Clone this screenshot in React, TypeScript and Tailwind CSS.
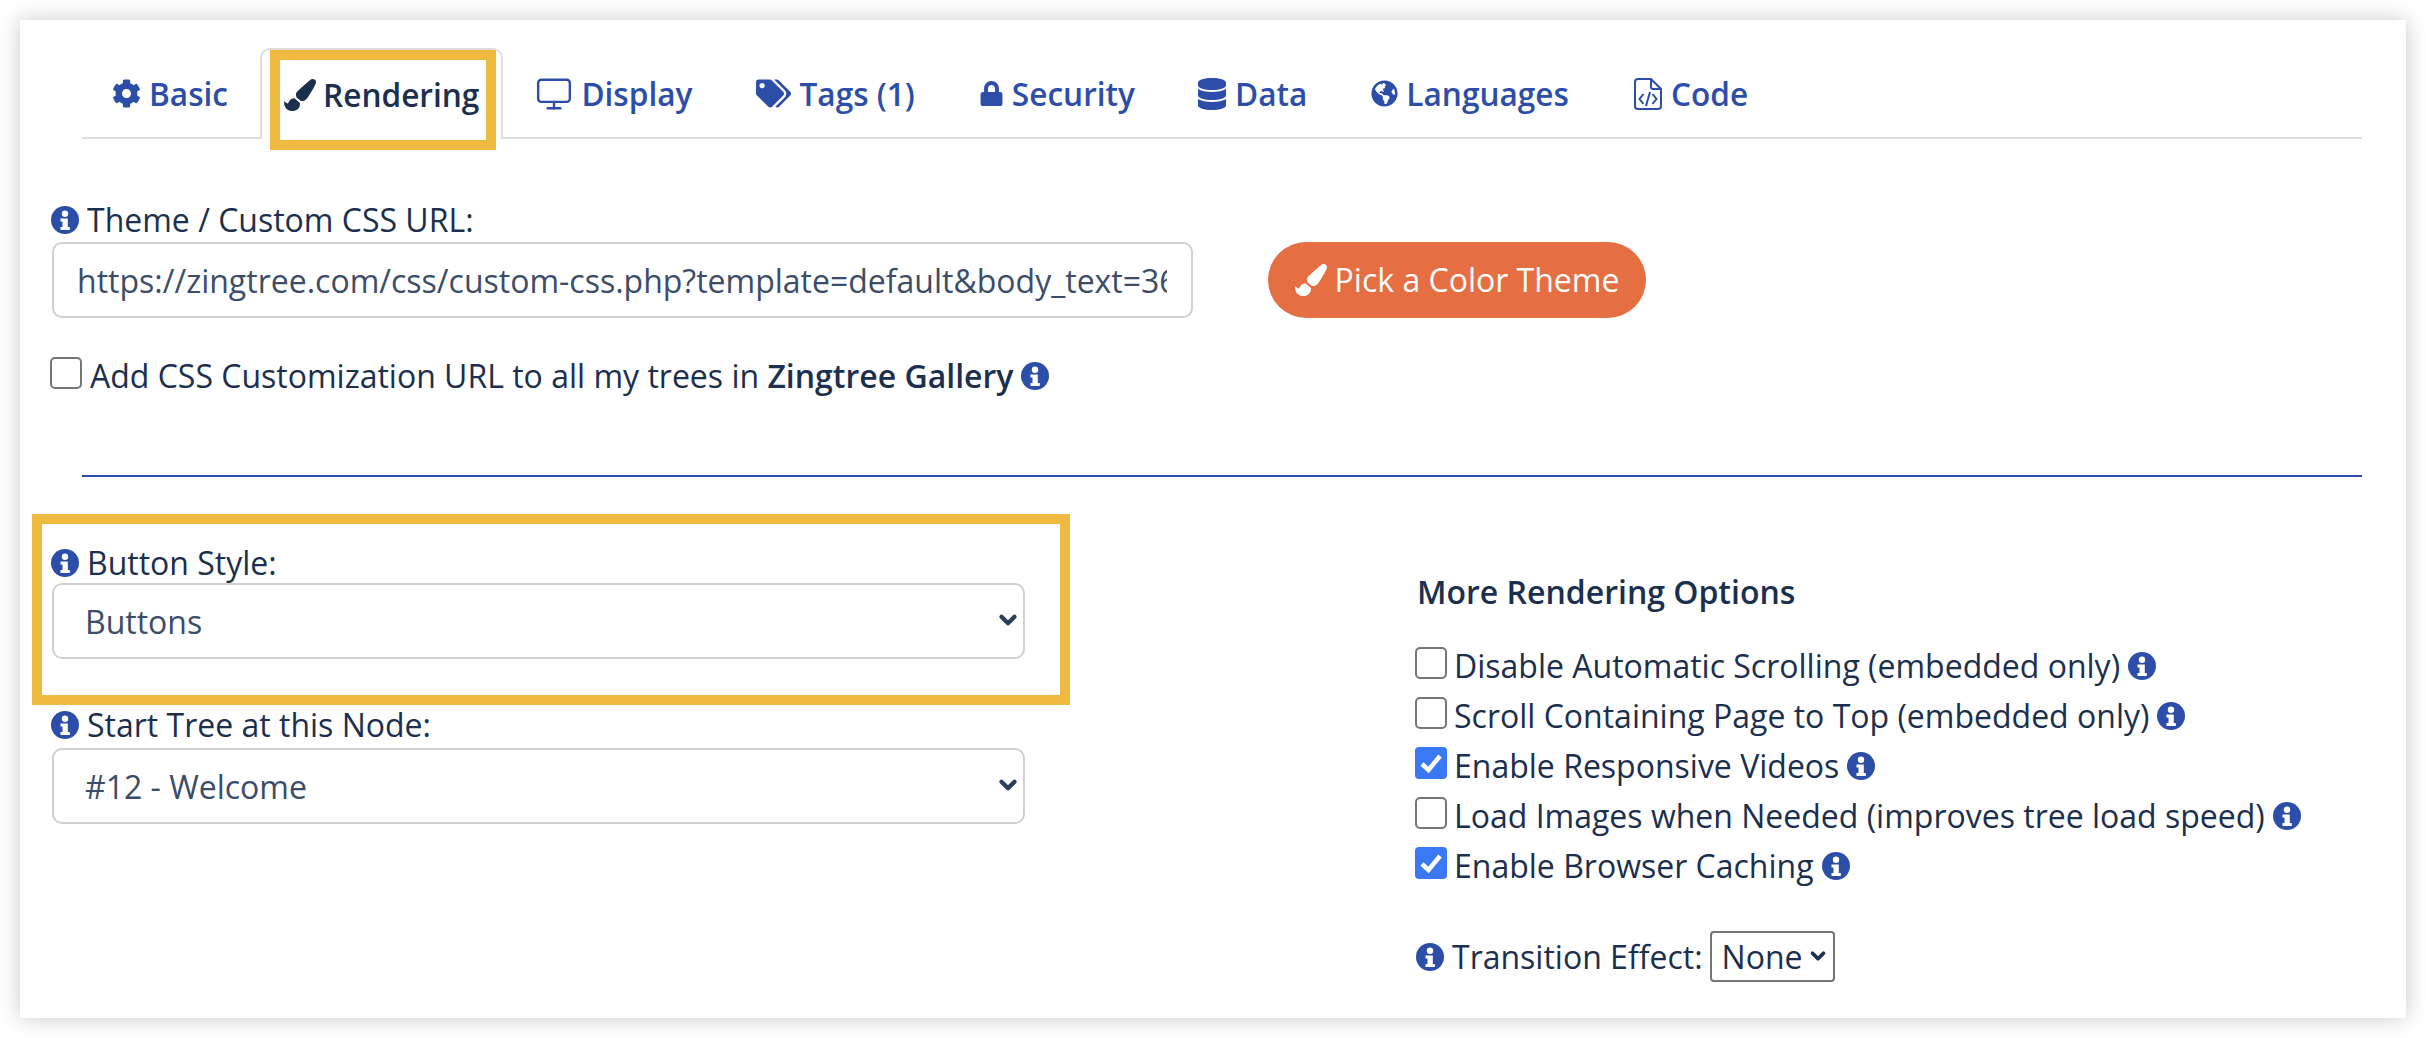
import { ChevronDown } from 'lucide-react';
import { FaCog, FaDatabase, FaGlobeAmericas, FaLock, FaPaintBrush, FaTags } from 'react-icons/fa';
import { LuMonitor } from 'react-icons/lu';

// outline file icon with </> inside, the packages' versions are too narrow
const FileCodeIcon = ({ className = '' }: { className?: string }) => (
  <svg width="28" height="32" viewBox="0 0 28 32" fill="none" stroke="currentColor" strokeWidth="2" className={className}>
    <path d="M4 1 H17 L27 11 V28 A3 3 0 0 1 24 31 H4 A3 3 0 0 1 1 28 V4 A3 3 0 0 1 4 1 Z" />
    <path d="M17 1 V9 A2 2 0 0 0 19 11 H27" />
    <path d="M9.5 16 L5.5 21 L9.5 26 M18.5 16 L22.5 21 L18.5 26 M16 14 L12 28" />
  </svg>
);

const tabs = [
  { label: 'Basic', icon: <FaCog size={29} /> },
  { label: 'Rendering', icon: <FaPaintBrush size={32} />, active: true },
  { label: 'Display', icon: <LuMonitor size={38} strokeWidth={1.5} /> },
  { label: 'Tags (1)', icon: <FaTags size={35} /> },
  { label: 'Security', icon: <FaLock size={25} /> },
  { label: 'Data', icon: <FaDatabase size={32} className="-ml-[3px] -mr-[1px]" /> },
  { label: 'Languages', icon: <FaGlobeAmericas size={27} /> },
  { label: 'Code', icon: <FileCodeIcon className="ml-[1px] mr-[1px]" /> },
];

const options = [
  { label: 'Disable Automatic Scrolling (embedded only)', checked: false },
  { label: 'Scroll Containing Page to Top (embedded only)', checked: false },
  { label: 'Enable Responsive Videos', checked: true },
  { label: 'Load Images when Needed (improves tree load speed)', checked: false },
  { label: 'Enable Browser Caching', checked: true },
];

const Info = ({ className = '' }: { className?: string }) => (
  <svg width="28" height="28" viewBox="0 0 28 28" className={`shrink-0 text-[#2c4ea8] ${className}`}>
    <circle cx="14" cy="14" r="14" fill="currentColor" />
    <circle cx="14" cy="7.8" r="3.2" fill="white" />
    <path d="M9.5 12.5 H16.8 V21 H18.8 V24 H9.5 V21 H11.5 V15.5 H9.5 Z" fill="white" />
  </svg>
);

const Checkbox = ({ checked, className = '' }: { checked?: boolean; className?: string }) =>
  checked ? (
    <span className={`flex h-[32px] w-[32px] shrink-0 items-center justify-center rounded-[4px] bg-[#3b78f5] ${className}`}>
      <svg width="24" height="22" viewBox="0 0 24 22" fill="none">
        <path d="M3 12 L9.5 18 L21 4" stroke="white" strokeWidth="4.5" />
      </svg>
    </span>
  ) : (
    <span className={`h-[32px] w-[32px] shrink-0 rounded-[5px] border-2 border-[#767676] bg-white ${className}`} />
  );

const FieldSelect = ({ value }: { value: string }) => (
  <div className="relative h-[76px] w-[973px]">
    <select
      defaultValue={value}
      className="h-full w-full appearance-none rounded-[10px] border-2 border-[#d0d0d0] bg-white pl-[31px] pt-[2px] text-[32px] text-[#3b4d68]"
    >
      <option>{value}</option>
    </select>
    <ChevronDown size={26} strokeWidth={4} className="pointer-events-none absolute right-[4px] top-[24px] text-[#2b3e5c]" />
  </div>
);

export default function App() {
  return (
    <div className="h-[1038px] w-[2426px] overflow-hidden bg-white pl-[20px] pt-[20px] font-['Open_Sans',sans-serif] text-[32px] text-[#1b2f4e]">
      <div className="relative h-[998px] w-[2386px] bg-white pt-[28px] shadow-[0_0_20px_rgba(0,0,0,0.22)]">
        {/* tabs */}
        <div className="ml-[62px] mr-[44px] h-[91px] border-b-2 border-[#dddddd]">
          <div className="-ml-[2px] flex h-[91px] text-[31.6px]">
            {tabs.map((tab) =>
              tab.active ? (
                <div
                  key={tab.label}
                  className="flex items-center gap-[7px] rounded-t-[10px] border-2 border-b-0 border-[#dddddd] bg-white pl-[22px] pr-[22px] font-semibold text-[#1b2f4e]"
                >
                  {tab.icon}
                  {tab.label}
                </div>
              ) : (
                <div key={tab.label} className="flex items-center gap-[8px] px-[32px] font-semibold text-[#2c4ea8]">
                  {tab.icon}
                  {tab.label}
                </div>
              ),
            )}
          </div>
        </div>

        <div className="pl-[32px] pr-[44px]">
          <label className="mt-[61px] flex h-[40px] items-center gap-[8px]">
            <Info className="-ml-[1px]" />
            Theme / Custom CSS URL:
          </label>
          <div className="mt-[2px] flex gap-[75px]">
            <input
              readOnly
              value="https://zingtree.com/css/custom-css.php?template=default&body_text=36454f"
              className="h-[76px] w-[1141px] rounded-[10px] border-2 border-[#d0d0d0] pl-[23px] pr-[24px] text-[#3b4d68] outline-none"
            />
            <button className="flex h-[76px] w-[378px] items-center justify-center gap-[8px] rounded-[38px] bg-[#e56e42] text-white">
              <FaPaintBrush size={32} />
              Pick a Color Theme
            </button>
          </div>
          <div className="mt-[38px] flex h-[40px] items-center gap-[8px]">
            <Checkbox className="-ml-[2px] -mt-[6px]" />
            <span>
              Add CSS Customization URL to all my trees in <b className="font-semibold">Zingtree Gallery</b>
            </span>
            <Info />
          </div>
        </div>

        <div className="ml-[62px] mr-[44px] mt-[79px] border-t-2 border-[#2c4ea8]" />

        <div className="flex pl-[32px]">
          <div className="w-[1363px] pt-[66px]">
            <label className="flex h-[40px] items-center gap-[8px]">
              <Info className="-ml-[1px]" />
              Button Style:
            </label>
            <FieldSelect value="Buttons" />
            <label className="mb-[3px] mt-[46px] flex h-[40px] items-center gap-[8px]">
              <Info className="-ml-[1px]" />
              Start Tree at this Node:
            </label>
            <FieldSelect value="#12 - Welcome" />
          </div>

          <div className="pt-[95px]">
            <h3 className="ml-[2px] flex h-[40px] items-center font-semibold">More Rendering Options</h3>
            <div className="mt-[35px] flex flex-col gap-[18px]">
              {options.map((opt) => (
                <div key={opt.label} className="flex h-[32px] items-center gap-[7px]">
                  <Checkbox checked={opt.checked} />
                  <div className="flex items-center gap-[8px] pt-[6px]">
                    <span>{opt.label}</span>
                    <Info />
                  </div>
                </div>
              ))}
            </div>
            <div className="ml-[2px] mt-[52px] flex h-[51px] items-center gap-[8px]">
              <Info className="-ml-[1px]" />
              <span>Transition Effect:</span>
              <div className="relative -ml-[1px] h-[51px] w-[125px]">
                <select defaultValue="None" className="h-full w-full appearance-none rounded-[4px] border-2 border-[#767676] bg-white pl-[10px]">
                  <option>None</option>
                </select>
                <ChevronDown size={22} strokeWidth={4} className="pointer-events-none absolute right-[6px] top-[14px] text-[#1b2f4e]" />
              </div>
            </div>
          </div>
        </div>

        {/* yellow highlight boxes drawn over the page */}
        <div className="pointer-events-none absolute left-[250px] top-[30px] h-[100px] w-[226px] border-[10px] border-[#efba3f]" />
        <div className="pointer-events-none absolute left-[12px] top-[494px] h-[191px] w-[1038px] border-[10px] border-[#efba3f]" />
      </div>
    </div>
  );
}
